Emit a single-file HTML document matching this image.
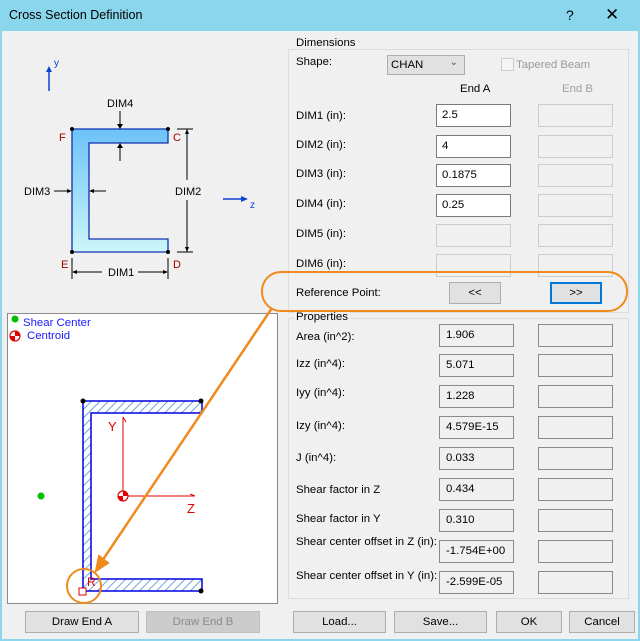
<!DOCTYPE html>
<html><head><meta charset="utf-8"><style>
*{box-sizing:border-box;margin:0;padding:0}
body{width:640px;height:641px;background:#f0f0f0;font-family:"Liberation Sans",sans-serif;font-size:11.4px;color:#000;position:relative;overflow:hidden}
.a{position:absolute;white-space:nowrap}
.tb{left:0;top:0;width:640px;height:31px;background:#8ad6ec}
.in{position:absolute;background:#fff;border:1px solid #7a7a7a;height:23px;padding:4px 0 0 5px}
.dis{position:absolute;background:#f0f0f0;border:1px solid #ccc;height:23px}
.ro{position:absolute;background:#f0f0f0;border:1px solid #8a8a8a;height:23px;padding:4px 0 0 6px}
.rb{position:absolute;background:#f0f0f0;border:1px solid #8a8a8a;height:23px}
.btn{position:absolute;background:#e1e1e1;border:1px solid #adadad;height:22px;text-align:center;line-height:20px}
.grp{position:absolute;border:1px solid #dcdcdc}
.gl{position:absolute;background:#f0f0f0;padding:0 2px}
</style></head><body>
<div class="a tb"></div>
<div class="a" style="left:0;top:31px;width:2px;height:610px;background:#8ad6ec"></div>
<div class="a" style="right:0;top:31px;width:2px;height:610px;background:#8ad6ec"></div>
<div class="a" style="left:0;bottom:0;width:640px;height:2px;background:#8ad6ec"></div>
<div class="a" style="left:9px;top:8px;font-size:12.5px">Cross Section Definition</div>
<div class="a" style="left:566px;top:7px;font-size:14px">?</div>
<div class="a" style="left:605px;top:5px;font-size:17px">✕</div>

<div class="grp" style="left:288px;top:49px;width:341px;height:264px"></div>
<div class="gl" style="left:294px;top:37px">Dimensions</div>
<div class="a" style="left:296px;top:56px">Shape:</div>
<div class="a" style="left:387px;top:55px;width:78px;height:20px;background:#e1e1e1;border:1px solid #adadad;padding:3px 0 0 3px">CHAN<span style="position:absolute;right:6px;top:1px;font-size:10px;color:#555">&#8964;</span></div>
<div class="a" style="left:501px;top:58px;width:13px;height:13px;border:1px solid #ccc;background:#f5f5f5"></div>
<div class="a" style="left:516px;top:59px;color:#9a9a9a">Tapered Beam</div>
<div class="a" style="left:460px;top:83px">End A</div>
<div class="a" style="left:562px;top:83px;color:#a0a0a0">End B</div>

<div class="a" style="left:296px;top:110px">DIM1 (in):</div>
<div class="a" style="left:296px;top:139px">DIM2 (in):</div>
<div class="a" style="left:296px;top:168px">DIM3 (in):</div>
<div class="a" style="left:296px;top:198px">DIM4 (in):</div>
<div class="a" style="left:296px;top:228px">DIM5 (in):</div>
<div class="a" style="left:296px;top:258px">DIM6 (in):</div>
<div class="in" style="left:436px;top:104px;width:75px">2.5</div>
<div class="in" style="left:436px;top:135px;width:75px">4</div>
<div class="in" style="left:436px;top:164px;width:75px">0.1875</div>
<div class="in" style="left:436px;top:194px;width:75px">0.25</div>
<div class="dis" style="left:436px;top:224px;width:75px"></div>
<div class="dis" style="left:436px;top:254px;width:75px"></div>
<div class="dis" style="left:538px;top:104px;width:75px"></div>
<div class="dis" style="left:538px;top:135px;width:75px"></div>
<div class="dis" style="left:538px;top:164px;width:75px"></div>
<div class="dis" style="left:538px;top:194px;width:75px"></div>
<div class="dis" style="left:538px;top:224px;width:75px"></div>
<div class="dis" style="left:538px;top:254px;width:75px"></div>
<div class="a" style="left:296px;top:287px">Reference Point:</div>
<div class="btn" style="left:449px;top:282px;width:52px">&lt;&lt;</div>
<div class="btn" style="left:550px;top:282px;width:52px;border:2px solid #0078d7;line-height:18px">&gt;&gt;</div>

<div class="grp" style="left:288px;top:318px;width:341px;height:281px"></div>
<div class="gl" style="left:294px;top:311px">Properties</div>
<div class="a" style="left:296px;top:331px">Area (in^2):</div>
<div class="a" style="left:296px;top:358px">Izz (in^4):</div>
<div class="a" style="left:296px;top:387px">Iyy (in^4):</div>
<div class="a" style="left:296px;top:420px">Izy (in^4):</div>
<div class="a" style="left:296px;top:452px">J (in^4):</div>
<div class="a" style="left:296px;top:484px">Shear factor in Z</div>
<div class="a" style="left:296px;top:513px">Shear factor in Y</div>
<div class="a" style="left:296px;top:536px">Shear center offset in Z (in):</div>
<div class="a" style="left:296px;top:570px">Shear center offset in Y (in):</div>
<div class="ro" style="left:439px;top:324px;width:75px">1.906</div>
<div class="ro" style="left:439px;top:354px;width:75px">5.071</div>
<div class="ro" style="left:439px;top:385px;width:75px">1.228</div>
<div class="ro" style="left:439px;top:416px;width:75px">4.579E-15</div>
<div class="ro" style="left:439px;top:447px;width:75px">0.033</div>
<div class="ro" style="left:439px;top:478px;width:75px">0.434</div>
<div class="ro" style="left:439px;top:509px;width:75px">0.310</div>
<div class="ro" style="left:439px;top:540px;width:75px">-1.754E+00</div>
<div class="ro" style="left:439px;top:571px;width:75px">-2.599E-05</div>
<div class="rb" style="left:538px;top:324px;width:75px"></div>
<div class="rb" style="left:538px;top:354px;width:75px"></div>
<div class="rb" style="left:538px;top:385px;width:75px"></div>
<div class="rb" style="left:538px;top:416px;width:75px"></div>
<div class="rb" style="left:538px;top:447px;width:75px"></div>
<div class="rb" style="left:538px;top:478px;width:75px"></div>
<div class="rb" style="left:538px;top:509px;width:75px"></div>
<div class="rb" style="left:538px;top:540px;width:75px"></div>
<div class="rb" style="left:538px;top:571px;width:75px"></div>

<div class="btn" style="left:293px;top:611px;width:93px">Load...</div>
<div class="btn" style="left:394px;top:611px;width:93px">Save...</div>
<div class="btn" style="left:496px;top:611px;width:66px">OK</div>
<div class="btn" style="left:569px;top:611px;width:66px">Cancel</div>
<div class="btn" style="left:25px;top:611px;width:114px">Draw End A</div>
<div class="btn" style="left:146px;top:611px;width:114px;background:#ccc;border-color:#bfbfbf;color:#8a8a8a">Draw End B</div>

<div class="a" style="left:7px;top:313px;width:271px;height:291px;background:#fff;border:1px solid #8a8a8a"></div>
<div class="a" style="left:23px;top:317px;color:#1a1aff">Shear Center</div>
<div class="a" style="left:27px;top:330px;color:#1a1aff">Centroid</div>

<svg class="a" style="left:0;top:0" width="640" height="641" viewBox="0 0 640 641">
<defs>
<linearGradient id="g" x1="0" y1="0" x2="0" y2="1"><stop offset="0" stop-color="#6cc2f8"/><stop offset="1" stop-color="#ccf6fa"/></linearGradient>
<pattern id="h" width="6" height="6" patternUnits="userSpaceOnUse" patternTransform="rotate(45)"><rect x="0" y="0" width="0.8" height="6" fill="#4a90dc"/></pattern>
</defs>
<g font-family="Liberation Sans,sans-serif" font-size="11">
<path d="M72 129H168V143H89V239H168V252H72Z" fill="url(#g)" stroke="#1030b0" stroke-width="1.3"/>
<g fill="#000"><circle cx="72" cy="129" r="2"/><circle cx="168" cy="129" r="2"/><circle cx="72" cy="252" r="2"/><circle cx="168" cy="252" r="2"/></g>
<g fill="#a00000" font-size="11"><text x="59" y="141">F</text><text x="173" y="141">C</text><text x="61" y="268">E</text><text x="173" y="268">D</text></g>
<g stroke="#000" stroke-width="1" fill="none">
<path d="M120 111V127M120 161V145M54 191H70M106 191H91M187 129V180M187 200V252M177 129H193M177 252H193M72 258V279M168 258V279M73 272H102M138 272H167"/>
</g>
<g fill="#000"><path d="M117 124L120 129L123 124Z"/><path d="M117 148L120 143L123 148Z"/><path d="M67 189L72 191L67 193Z"/><path d="M94 189L89 191L94 193Z"/><path d="M185 134L187 129L189 134Z"/><path d="M185 247L187 252L189 247Z"/><path d="M77 270L72 272L77 274Z"/><path d="M163 270L168 272L163 274Z"/></g>
<text x="107" y="107">DIM4</text><text x="24" y="195">DIM3</text><text x="175" y="195">DIM2</text><text x="108" y="276">DIM1</text>
<path d="M49 91V70" stroke="#1040d0" stroke-width="1.5"/><path d="M46 72L49 66L52 72Z" fill="#1040d0"/>
<text x="54" y="66" fill="#1040d0" font-size="10">y</text>
<path d="M223 199H243" stroke="#1040d0" stroke-width="1.5"/><path d="M241 196L248 199L241 202Z" fill="#1040d0"/>
<text x="250" y="208" fill="#1040d0" font-size="10">z</text>

<path d="M83 401H202V413H91V579H202V591H83Z" fill="url(#h)" stroke="#0000e0" stroke-width="1.5"/>
<g fill="#000"><circle cx="83" cy="401" r="2.5"/><circle cx="201" cy="401" r="2.5"/><circle cx="201" cy="591" r="2.5"/></g>
<path d="M123 417V496H195M123 417l3 5M195 496l-5-2" stroke="#e00000" stroke-width="1" fill="none"/>
<text x="108" y="431" fill="#e00000" font-size="13">Y</text><text x="187" y="513" fill="#e00000" font-size="13">Z</text>
<circle cx="123" cy="496" r="5" fill="#fff" stroke="#e00000" stroke-width="1.2"/><path d="M123 491A5 5 0 0 1 128 496H123ZM123 501A5 5 0 0 1 118 496H123Z" fill="#e00000"/>
<circle cx="41" cy="496" r="3.5" fill="#00c000"/>
<circle cx="15" cy="319" r="3.5" fill="#00c000"/>
<circle cx="15" cy="336" r="5" fill="#fff" stroke="#e00000" stroke-width="1.2"/><path d="M15 331A5 5 0 0 1 20 336H15ZM15 341A5 5 0 0 1 10 336H15Z" fill="#e00000"/>
<rect x="79" y="588" width="7" height="7" fill="#fff" stroke="#e00000"/>
<text x="87" y="586" fill="#e00000" font-size="12">R</text>
<rect x="262" y="272" width="365" height="39" rx="19" fill="none" stroke="#f08a1c" stroke-width="2"/>
<circle cx="84" cy="586" r="17" fill="none" stroke="#f08a1c" stroke-width="2"/>
<path d="M272 308L100 564" stroke="#f08a1c" stroke-width="2.5"/>
<path d="M96 571L99 556L108 563Z" fill="#f08a1c" stroke="#f08a1c" stroke-width="2"/>
</g></svg>
</body></html>
